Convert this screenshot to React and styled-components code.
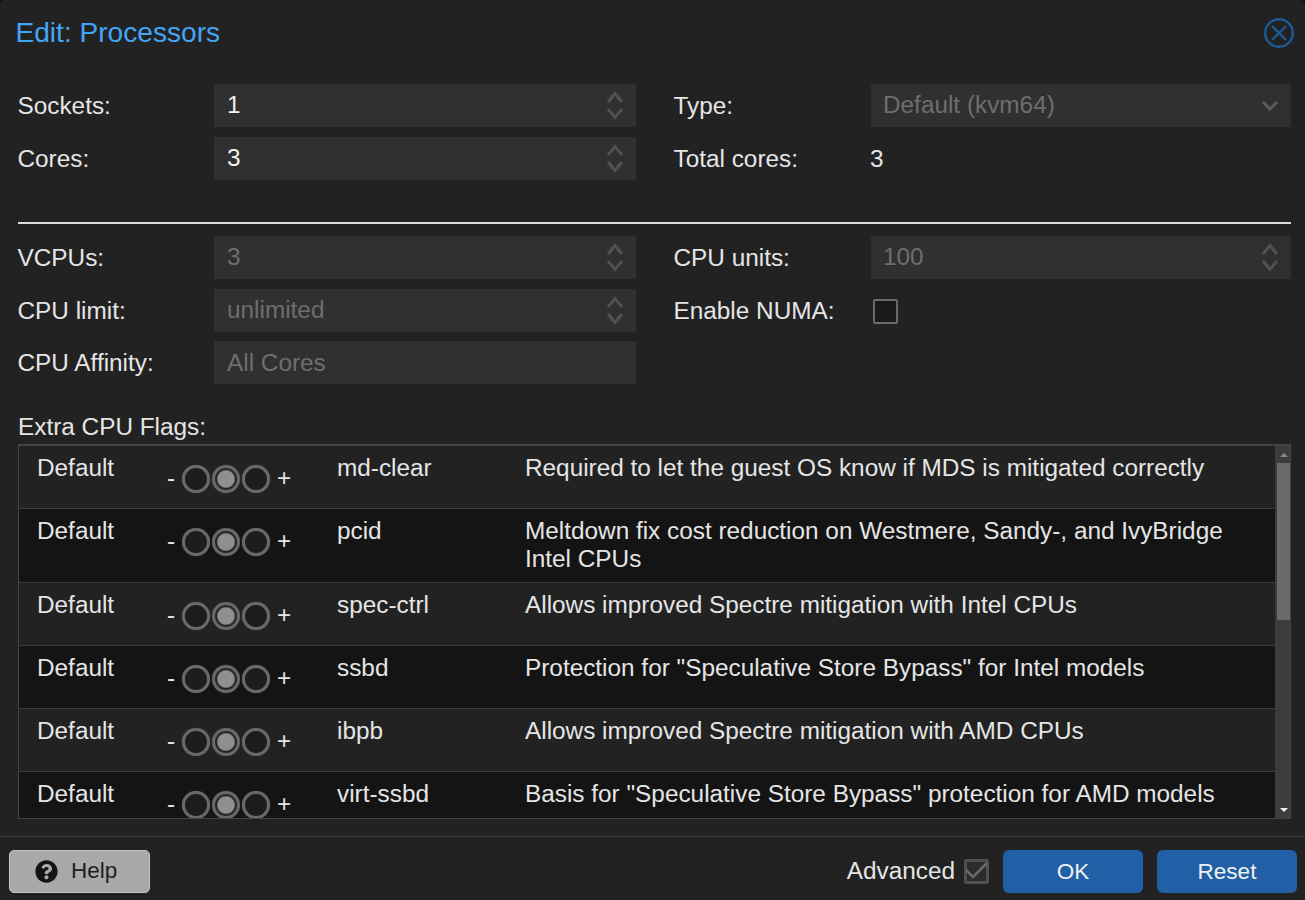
import styled, { createGlobalStyle } from "styled-components";
import { FaQuestionCircle } from "react-icons/fa";

const GlobalStyle = createGlobalStyle`
  html, body {
    margin: 0;
    background: #111111;
  }
  * {
    box-sizing: border-box;
  }
`;

const Dialog = styled.div`
  display: flex;
  flex-direction: column;
  width: 1305px;
  height: 900px;
  overflow: hidden;
  background: #222222;
  border-radius: 5px 5px 0 0;
  color: #e5e5e5;
  font-family: "Liberation Sans", Arial, sans-serif;
  font-size: 24.35px;
`;

const TitleBar = styled.div`
  display: flex;
  align-items: center;
  justify-content: space-between;
  height: 66px;
  padding: 0 11px 0 15.5px;
`;

const Title = styled.h1`
  margin: 0;
  color: #42a5f5;
  font-size: 28.1px;
  font-weight: 400;
`;

const Body = styled.div`
  display: flex;
  flex: 1;
  flex-direction: column;
  min-height: 0;
  padding: 18px 14px 0 18px;
`;

const FormColumns = styled.div`
  display: grid;
  grid-template-columns: 618px 617px;
  column-gap: 38px;
  width: 1273px;
`;

const Column = styled.div`
  display: flex;
  flex-direction: column;
  gap: 10px;
`;

const Field = styled.div`
  display: flex;
  align-items: center;
  height: 43px;
`;

// last row of the lower block is a pixel closer than the others
const LastField = styled(Field)`
  margin-top: -1px;
`;

const Label = styled.div`
  flex: none;
  width: ${({ $wide }) => ($wide ? "197px" : "196px")};
  margin-left: -0.5px;
`;

const Input = styled.div`
  display: flex;
  flex: 1;
  align-items: center;
  justify-content: space-between;
  height: 43px;
  padding: 0 12px 0 ${({ $wide }) => ($wide ? "12.5px" : "13.5px")};
  background: #303030;
  color: ${({ $disabled }) => ($disabled ? "#6e6e6e" : "#f0f0f0")};
`;

// the text in the inputs sits a pixel above the label's
const InputText = styled.span`
  margin-top: -2px;
`;

const Value = styled.div`
  margin-left: -0.5px;
  color: #e5e5e5;
`;

const Divider = styled.div`
  width: 1273px;
  height: 2px;
  margin: 42px 0 12px;
  background: #dddddd;
`;

const Check = styled.div`
  display: flex;
  align-items: center;
  justify-content: center;
  width: 25px;
  height: 25px;
  background: #1a1a1a;
  border: 2px solid #6a6a6a;
  border-radius: 2px;
`;

const NumaCheck = styled(Check)`
  margin: 2px 0 0 2px;
`;

const FlagsLabel = styled.div`
  margin-top: 28px;
  height: 32px;
  line-height: 30px;
`;

const Grid = styled.div`
  display: flex;
  width: 1273px;
  height: 375px;
  border: 1px solid #444444;
  border-top-width: 2px;
`;

const Rows = styled.div`
  flex: 1;
  min-width: 0;
  overflow: hidden;
`;

const Row = styled.div`
  display: grid;
  grid-template-columns: 130px 170px 188px 1fr;
  min-height: 63px;
  padding: 8px 0 9px;
  background: ${({ $odd }) => ($odd ? "#141414" : "#222222")};
  border-bottom: 1px solid #3c3c3c;
  line-height: 28px;
`;

const Cell = styled.div`
  padding: 0 18px;
`;

const Description = styled(Cell)`
  padding-right: 40px;
`;

const Toggle = styled.div`
  display: flex;
  align-items: center;
  gap: 2px;
  margin: 11px 0 0 18px;
  height: 28px;
`;

const Sign = styled.span`
  width: ${({ $plus }) => ($plus ? "22px" : "13px")};
  margin-left: ${({ $plus }) => ($plus ? "5px" : "0")};
  margin-bottom: 2px;
`;

const Radio = styled.div`
  flex: none;
  width: 28px;
  height: 28px;
  border: 3px solid #696969;
  border-radius: 50%;
  box-shadow: 0 0 1px #555555;
  background: ${({ $on }) =>
    $on
      ? "radial-gradient(circle, #8f8f8f 0 8px, #262626 9.5px)"
      : "#1d1d1d"};
`;

const Scrollbar = styled.div`
  display: flex;
  flex: none;
  flex-direction: column;
  align-items: flex-end;
  width: 15px;
  background: #3c3c3c;
`;

const ScrollTrack = styled.div`
  flex: 1;
  width: 13px;
`;

const ScrollThumb = styled.div`
  width: 13px;
  height: 157px;
  background: #6a6a6a;
`;

const ArrowBox = styled.div`
  display: flex;
  align-items: center;
  justify-content: center;
  width: 13px;
  height: 17px;
`;

const Arrow = styled.div`
  width: 0;
  height: 0;
  border-left: 4px solid transparent;
  border-right: 4px solid transparent;
  ${({ $down }) =>
    $down
      ? "border-top: 4px solid #f0f0f0;"
      : "border-bottom: 4px solid #8a8a8a;"}
`;

const Footer = styled.div`
  display: flex;
  flex: none;
  align-items: center;
  height: 64px;
  padding: 13px 8px 7px 9px;
  border-top: 1px solid #3c3c3c;
`;

const HelpButton = styled.button`
  display: flex;
  align-items: center;
  gap: 13px;
  width: 141px;
  height: 43px;
  padding: 0 0 0 25px;
  background: #a9a9a9;
  border: 1px solid #c4c4c4;
  border-radius: 5px;
  color: #1f1f1f;
  font: inherit;
  font-size: 22.5px;
`;

const HelpText = styled.span`
  margin-top: -2px;
`;

const Spacer = styled.div`
  flex: 1;
`;

const Advanced = styled.div`
  display: flex;
  align-items: center;
  gap: 9px;
  margin-right: 13px;
`;

const AdvancedText = styled.span`
  margin-top: -2px;
`;

const AdvancedCheck = styled(Check)`
  margin-right: 1px;
  background: #2b2b2b;
  border: 3px solid #505050;
`;

const PrimaryButton = styled.button`
  width: 140px;
  height: 43px;
  margin-left: ${({ $gap }) => ($gap ? "14px" : "0")};
  background: #2160a6;
  border: none;
  border-radius: 6px;
  color: #f0f0f0;
  font: inherit;
  font-size: 22.5px;
`;

function Close() {
  return (
    <svg width="30" height="30" viewBox="0 0 30 30" fill="none" stroke="#1a5c96" strokeWidth="2.4">
      <circle cx="15" cy="15" r="13.8" />
      <path d="M8 8 22 22M22 8 8 22" />
    </svg>
  );
}

function Spinner() {
  return (
    <svg width="18" height="31" viewBox="0 0 18 31" fill="none" stroke="#525252" strokeWidth="3">
      <path d="M2 12 9 3.5 16 12M2 19 9 27.5 16 19" />
    </svg>
  );
}

function ChevronDown() {
  return (
    <svg width="18" height="12" viewBox="0 0 18 12" fill="none" stroke="#5c5c5c" strokeWidth="3">
      <path d="M2 2 9 9 16 2" />
    </svg>
  );
}

function CheckMark() {
  return (
    <svg width="22" height="19" viewBox="0 0 22 19" fill="none" stroke="#6a6a6a" strokeWidth="2.6" style={{ flex: "none" }}>
      <path d="M0 8 7 15 21 1" />
    </svg>
  );
}

const flags = [
  ["md-clear", "Required to let the guest OS know if MDS is mitigated correctly"],
  ["pcid", "Meltdown fix cost reduction on Westmere, Sandy-, and IvyBridge Intel CPUs"],
  ["spec-ctrl", "Allows improved Spectre mitigation with Intel CPUs"],
  ["ssbd", 'Protection for "Speculative Store Bypass" for Intel models'],
  ["ibpb", "Allows improved Spectre mitigation with AMD CPUs"],
  ["virt-ssbd", 'Basis for "Speculative Store Bypass" protection for AMD models'],
];

function App() {
  return (
    <>
      <GlobalStyle />
      <Dialog>
        <TitleBar>
          <Title>Edit: Processors</Title>
          <Close />
        </TitleBar>
        <Body>
          <FormColumns>
            <Column>
              <Field>
                <Label>Sockets:</Label>
                <Input><InputText>1</InputText><Spinner /></Input>
              </Field>
              <Field>
                <Label>Cores:</Label>
                <Input><InputText>3</InputText><Spinner /></Input>
              </Field>
            </Column>
            <Column>
              <Field>
                <Label $wide>Type:</Label>
                <Input $disabled $wide><InputText>Default (kvm64)</InputText><ChevronDown /></Input>
              </Field>
              <Field>
                <Label $wide>Total cores:</Label>
                <Value>3</Value>
              </Field>
            </Column>
          </FormColumns>
          <Divider />
          <FormColumns>
            <Column>
              <Field>
                <Label>VCPUs:</Label>
                <Input $disabled><InputText>3</InputText><Spinner /></Input>
              </Field>
              <Field>
                <Label>CPU limit:</Label>
                <Input $disabled><InputText>unlimited</InputText><Spinner /></Input>
              </Field>
              <LastField>
                <Label>CPU Affinity:</Label>
                <Input $disabled>All Cores</Input>
              </LastField>
            </Column>
            <Column>
              <Field>
                <Label $wide>CPU units:</Label>
                <Input $disabled $wide><InputText>100</InputText><Spinner /></Input>
              </Field>
              <Field>
                <Label $wide>Enable NUMA:</Label>
                <NumaCheck />
              </Field>
            </Column>
          </FormColumns>
          <FlagsLabel>Extra CPU Flags:</FlagsLabel>
          <Grid>
            <Rows>
              {flags.map(([name, text], i) => (
                <Row key={name} $odd={i % 2 === 1}>
                  <Cell>Default</Cell>
                  <Toggle>
                    <Sign>-</Sign>
                    <Radio />
                    <Radio $on />
                    <Radio />
                    <Sign $plus>+</Sign>
                  </Toggle>
                  <Cell>{name}</Cell>
                  <Description>{text}</Description>
                </Row>
              ))}
            </Rows>
            <Scrollbar>
              <ArrowBox><Arrow /></ArrowBox>
              <ScrollThumb />
              <ScrollTrack />
              <ArrowBox><Arrow $down /></ArrowBox>
            </Scrollbar>
          </Grid>
        </Body>
        <Footer>
          <HelpButton>
            <FaQuestionCircle size={23} color="#141414" />
            <HelpText>Help</HelpText>
          </HelpButton>
          <Spacer />
          <Advanced>
            <AdvancedText>Advanced</AdvancedText>
            <AdvancedCheck><CheckMark /></AdvancedCheck>
          </Advanced>
          <PrimaryButton>OK</PrimaryButton>
          <PrimaryButton $gap>Reset</PrimaryButton>
        </Footer>
      </Dialog>
    </>
  );
}

export default App;
